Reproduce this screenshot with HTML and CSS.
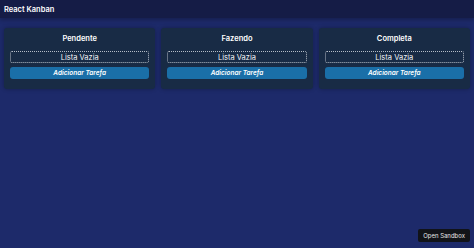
FILE: index.html
```html
<!DOCTYPE html>
<html lang="en">
<head>
    <meta charset="UTF-8">
    <meta name="viewport" content="width=device-width, initial-scale=1.0">
    <title>React Kanban</title>
    <link rel="stylesheet" href="styles.css">
</head>
<body>
    <header class="topbar">React Kanban</header>

    <main class="board">
        <section class="column">
            <h2 class="column-title">Pendente</h2>
            <div class="empty">Lista Vazia</div>
            <button class="add-btn">Adicionar Tarefa</button>
        </section>
        <section class="column">
            <h2 class="column-title">Fazendo</h2>
            <div class="empty">Lista Vazia</div>
            <button class="add-btn">Adicionar Tarefa</button>
        </section>
        <section class="column">
            <h2 class="column-title">Completa</h2>
            <div class="empty">Lista Vazia</div>
            <button class="add-btn">Adicionar Tarefa</button>
        </section>
    </main>

    <a class="sandbox" href="#">Open Sandbox</a>
</body>
</html>
```

FILE: styles.css
```css
* {
    box-sizing: border-box;
}

body {
    margin: 0;
    height: 248px;
    font-family: Inter, "Noto Sans", sans-serif;
    background-color: #1d2a6a;
    color: #fff;
}

.topbar {
    height: 18px;
    padding: 0 4px;
    display: flex;
    align-items: center;
    background-color: #151c46;
    font-size: 7.5px;
    font-weight: 600;
    box-shadow: 0 2px 4px rgba(0, 0, 0, 0.25);
}

.board {
    display: grid;
    grid-template-columns: repeat(3, 1fr);
    gap: 6px;
    padding: 10px 4px;
}

.column {
    display: flex;
    flex-direction: column;
    gap: 4px;
    padding: 6px 6px 10px;
    background-color: #182b45;
    border-radius: 3px;
    box-shadow: 0 0 4px rgba(0, 0, 0, 0.3);
}

.column-title {
    margin: 0 0 4px;
    text-align: center;
    font-size: 7.5px;
    font-weight: 600;
    line-height: 9px;
}

.empty {
    height: 12px;
    display: flex;
    align-items: center;
    justify-content: center;
    border: 1px dotted #b5bcc6;
    border-radius: 2px;
    font-size: 7.5px;
    color: #f0f2f5;
}

.add-btn {
    height: 12px;
    border: none;
    border-radius: 3px;
    background-color: #1a6fa8;
    color: #fff;
    font-family: inherit;
    font-size: 6.5px;
    font-style: italic;
    font-weight: 600;
    padding: 0;
}

.sandbox {
    position: fixed;
    right: 4px;
    bottom: 6px;
    padding: 3px 5px;
    background-color: #111318;
    color: #e6e6e6;
    font-size: 6px;
    text-decoration: none;
    border-radius: 2px;
}
```
